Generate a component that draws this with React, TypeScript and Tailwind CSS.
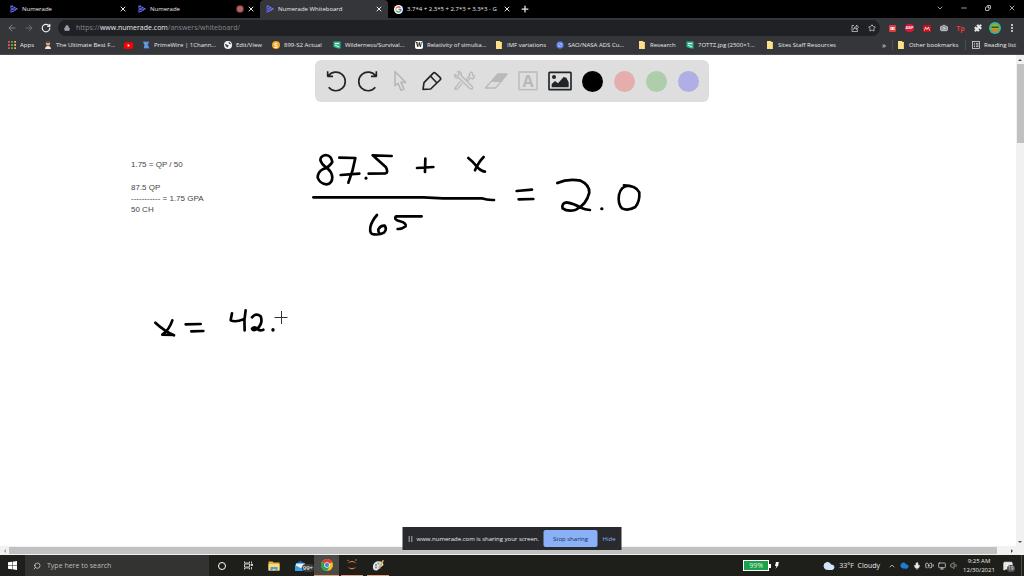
import type { ReactNode } from 'react';
import {
  ArrowLeft,
  ArrowRight,
  BatteryCharging,
  Camera,
  ChevronDown,
  ChevronUp,
  Cloud,
  Copy,
  Lock,
  MessageSquareText,
  Mic,
  Minus,
  Monitor,
  MoreVertical,
  Plus,
  Puzzle,
  RotateCw,
  Search,
  Star,
  Volume1,
  X,
} from 'lucide-react';

// ---------- Small icons ----------

const NumeradeIcon = () => (
  <svg viewBox="0 0 16 16" className="h-2 w-2 shrink-0" fill="none" stroke="#5b5ce6" strokeWidth="2.4">
    <path d="M2 1v5l6 2-6 2v5" />
    <path d="M3 1.5 14 8 3 14.500" stroke="#7f80ff" strokeDasharray="4 1" />
  </svg>
);

const GoogleIcon = () => (
  <svg viewBox="0 0 18 18" className="h-[9px] w-[9px] shrink-0" fill="none" strokeWidth="2.6">
    <circle cx="9" cy="9" r="9" fill="#fff" />
    <path d="M13 5.500A5.300 5.300 0 0 0 4.500 6.500" stroke="#ea4335" />
    <path d="M4.500 6.500a5.300 5.300 0 0 0 0 5" stroke="#fbbc05" />
    <path d="M4.500 11.500a5.300 5.300 0 0 0 7.700 1.500" stroke="#34a853" />
    <path d="M12.200 13A5 5 0 0 0 14 9H9" stroke="#4285f4" />
  </svg>
);

const AppsIcon = () => (
  <svg viewBox="0 0 9 9" className="h-2 w-2 shrink-0">
    <path d="M0 0h2v2H0zM0 3.500h2v2H0zM0 7h2v2H0z" fill="#e8584a" />
    <path d="M3.500 0h2v2h-2zM3.500 3.500h2v2h-2zM3.500 7h2v2h-2z" fill="#4fae6b" />
    <path d="M7 0h2v2H7zM7 3.500h2v2H7zM7 7h2v2H7z" fill="#e9b646" />
  </svg>
);

const FolderIcon = () => (
  <svg viewBox="0 0 14 16" className="h-2 w-2 shrink-0">
    <path d="M1 0h8l1 2h3v13l-1 1H1z" fill="#fbe08a" />
    <path d="M11 4h2v11h-2z" fill="#f0c95c" />
  </svg>
);

const PersonIcon = () => (
  <svg viewBox="0 0 16 16" className="h-2 w-2 shrink-0">
    <circle cx="8" cy="5" r="4.500" fill="#d9a583" />
    <path d="M2 16c0-8 12-8 12 0z" fill="#f3e4d7" />
    <path d="M4 4c1-5 7-5 8 0z" fill="#6b3a25" />
  </svg>
);

const YoutubeIcon = () => (
  <svg viewBox="0 0 16 12" className="h-[7px] w-[9px] shrink-0">
    <rect width="16" height="12" rx="3" fill="#f00" />
    <path d="M6.500 3.500v5l4-2.500z" fill="#fff" />
  </svg>
);

const FilmIcon = () => (
  <svg viewBox="0 0 16 16" className="h-2 w-2 shrink-0">
    <path d="M1 1h14l-3 7 3 7H3l2-6z" fill="#3c78c8" />
    <path d="M4 4h8M5 8h6M4 12h9" stroke="#a9d0f5" strokeWidth="1.500" />
  </svg>
);

const GlobeIcon = () => (
  <svg viewBox="0 0 16 16" className="h-2 w-2 shrink-0">
    <circle cx="8" cy="8" r="8" fill="#f1f3f4" />
    <path d="M2 6c3-1 4 2 6 2s1 3-1 5c-3-1-4-3-5-7zM9 2c3 0 4 2 5 4-2 1-5 0-5-4z" fill="#45484d" />
  </svg>
);

const LetterIcon = ({ letter, className }: { letter: string; className: string }) => (
  <span className={`flex h-2 w-2 shrink-0 items-center justify-center text-[7px] leading-none font-bold ${className}`}>
    {letter}
  </span>
);

const ImageSiteIcon = () => (
  <svg viewBox="0 0 16 16" className="h-2 w-2 shrink-0">
    <path d="M1 1h14v14h-5l-9-3z" fill="#35b88a" />
    <path d="M4 5h8M4 8l8 4" stroke="#d6fff0" strokeWidth="2" />
  </svg>
);

const AdsIcon = () => (
  <svg viewBox="0 0 16 16" className="h-2 w-2 shrink-0">
    <circle cx="8" cy="8" r="7.500" fill="#4e6fd8" />
    <circle cx="8" cy="8" r="4" fill="none" stroke="#c9d6ff" strokeWidth="1.500" />
    <path d="M5 11 11 5" stroke="#c9d6ff" strokeWidth="1.500" />
  </svg>
);

const ReadingListIcon = () => (
  <svg viewBox="0 0 16 16" className="h-2 w-2 shrink-0" fill="none" stroke="#d5d7da" strokeWidth="1.600">
    <rect x="1" y="1" width="14" height="14" />
    <path d="M4 5h2M8 5h5M4 8h2M8 8h5M4 11h2M8 11h5" />
  </svg>
);

const ShareIcon = () => (
  <svg viewBox="0 0 16 16" className="h-2 w-2" fill="none" stroke="#c4c7ca" strokeWidth="1.600">
    <path d="M6 3H2v12h11v-4" />
    <path d="M5 11q1-6 6-6V2l4 4.500-4 4.500V8q-4 0-6 3z" />
  </svg>
);

const AvatarIcon = () => (
  <svg viewBox="0 0 24 24" className="h-3 w-3">
    <circle cx="12" cy="12" r="12" fill="#38b49c" />
    <ellipse cx="12" cy="12" rx="9" ry="8" fill="#8fb52e" />
    <path d="M4 13q8 4 16 0l-3 6H7z" fill="#e2742c" />
    <path d="M5 9h14v3H5z" fill="#37561d" />
  </svg>
);

// ---------- Data ----------

interface Tab {
  title: string;
  icon: ReactNode;
  active?: boolean;
  recording?: boolean;
}

const tabs: Tab[] = [
  { title: 'Numerade', icon: <NumeradeIcon /> },
  { title: 'Numerade', icon: <NumeradeIcon />, recording: true },
  { title: 'Numerade Whiteboard', icon: <NumeradeIcon />, active: true },
  { title: '3.7*4 + 2.3*5 + 2.7*3 + 3.3*3 - G', icon: <GoogleIcon /> },
];

interface Bookmark {
  label: string;
  icon: ReactNode;
  width: string;
}

const bookmarks: Bookmark[] = [
  { label: 'Apps', icon: <AppsIcon />, width: 'w-9' },
  { label: 'The Ultimate Best F...', icon: <PersonIcon />, width: 'w-20' },
  { label: '', icon: <YoutubeIcon />, width: 'w-[18px]' },
  { label: 'PrimeWire | 1Chann...', icon: <FilmIcon />, width: 'w-[82px]' },
  { label: 'Edit/View', icon: <GlobeIcon />, width: 'w-12' },
  { label: '899-S2 Actual', icon: <LetterIcon letter="S" className="rounded-full bg-[#f5a623] text-white" />, width: 'w-[61px]' },
  { label: 'Wilderness/Survival...', icon: <ImageSiteIcon />, width: 'w-[82px]' },
  { label: 'Relativity of simulta...', icon: <LetterIcon letter="W" className="rounded-xs bg-white font-serif text-black" />, width: 'w-20' },
  { label: 'IMF variations', icon: <FolderIcon />, width: 'w-[61px]' },
  { label: 'SAO/NASA ADS Cu...', icon: <AdsIcon />, width: 'w-[82px]' },
  { label: 'Research', icon: <FolderIcon />, width: 'w-12' },
  { label: '7OTTZ.jpg (2500×1...', icon: <ImageSiteIcon />, width: 'w-20' },
  { label: 'Sites Staff Resources', icon: <FolderIcon />, width: 'w-20' },
];

// Drawing tools, each drawn on a 96 unit grid
const tools: { name: string; icon: ReactNode; enabled: boolean }[] = [
  {
    name: 'Undo',
    enabled: true,
    icon: <path d="M23 19v15h16M25 33A28 28 0 1 1 26 67" strokeWidth="5" />,
  },
  {
    name: 'Redo',
    enabled: true,
    icon: <path d="M73 19v15H57M71 33A28 28 0 1 0 70 67" strokeWidth="5" />,
  },
  {
    name: 'Select',
    enabled: false,
    icon: <path d="M33 20v42l9-7 9 21 9-4-9-20h14z" strokeWidth="5" />,
  },
  {
    name: 'Pen',
    enabled: true,
    icon: (
      <g strokeWidth="5">
        <path d="M21 73l3-20 27-28q4-4 8 0l13 12q4 4 0 8L44 72z" />
        <path d="M43 33l20 21" />
      </g>
    ),
  },
  {
    name: 'Tools',
    enabled: false,
    icon: (
      <g strokeWidth="4">
        <path d="M32 38 66 71q6 3 8-2 1-3-2-5L40 32q3-12-11-13l6 8-7 7-8-6q-1 15 12 10z" />
        <path d="M54 44l10-10q-1-9 5-13l5 4-1 5 6 4-4 8-7-3-9 9M43 55 27 73q-5 2-7-3L37 49" />
      </g>
    ),
  },
  {
    name: 'Eraser',
    enabled: false,
    icon: (
      <g strokeWidth="4">
        <path d="M16 69l18-20h30L46 69z" />
        <path d="M34 49l19-22h28L64 49z" fill="currentColor" />
      </g>
    ),
  },
  {
    name: 'Text',
    enabled: false,
    icon: (
      <g>
        <rect x="21" y="21" width="54" height="53" strokeWidth="4" />
        <text x="48" y="65" textAnchor="middle" fontSize="48" fontWeight="bold" fill="currentColor" stroke="none">
          A
        </text>
      </g>
    ),
  },
  {
    name: 'Image',
    enabled: true,
    icon: (
      <g>
        <rect x="15" y="22" width="66" height="52" rx="2" strokeWidth="5" />
        <circle cx="30" cy="36" r="6" fill="currentColor" stroke="none" />
        <path d="M23 67V57l10-9 9 7 17-19 8 2 7 14v15z" fill="currentColor" stroke="none" />
      </g>
    ),
  },
];

const colors = [
  { name: 'Black', className: 'bg-black' },
  { name: 'Red', className: 'bg-[#e6adad]' },
  { name: 'Green', className: 'bg-[#aecdaa]' },
  { name: 'Blue', className: 'bg-[#b0aee5]' },
];

// ---------- Browser ----------

const TabStrip = () => (
  <div className="flex h-[18px] shrink-0 bg-black pl-1">
    {tabs.map((tab, index) => (
      <div
        key={index}
        className={`flex w-32 items-center gap-1 rounded-t pr-[5px] pl-1.5 ${tab.active ? 'bg-[#35363a]' : ''}`}
      >
        {tab.icon}
        <button className="flex-1 text-left whitespace-nowrap">{tab.title}</button>
        {tab.recording && <span className="h-1.5 w-1.5 rounded-full bg-[#b86464] ring-1 ring-[#5c2a2a]" />}
        <button aria-label="Close tab">
          <X className="h-2 w-2" strokeWidth={3} />
        </button>
      </div>
    ))}
    <div className="flex items-center pl-1">
      <button aria-label="New tab">
        <Plus className="h-2.5 w-2.5" strokeWidth={3} />
      </button>
    </div>
    <div className="ml-auto flex h-4 items-center">
      <button aria-label="Search tabs" className="flex w-6 justify-center">
        <ChevronDown className="h-2 w-2" />
      </button>
      <button aria-label="Minimize" className="flex w-6 justify-center">
        <Minus className="h-2 w-2" />
      </button>
      <button aria-label="Restore" className="flex w-6 justify-center">
        <Copy className="h-1.5 w-1.5 -scale-x-100" strokeWidth={3} />
      </button>
      <button aria-label="Close" className="flex w-6 justify-center">
        <X className="h-2 w-2" />
      </button>
    </div>
  </div>
);

const AddressBar = () => (
  <div className="flex h-5 shrink-0 items-center bg-[#35363a]">
    <div className="flex items-center pl-1">
      <button aria-label="Back" className="flex w-4 justify-center text-[#8d8e91]">
        <ArrowLeft className="h-2.5 w-2.5" />
      </button>
      <button aria-label="Forward" className="flex w-[17px] justify-center text-[#77787b]">
        <ArrowRight className="h-2.5 w-2.5" />
      </button>
      <button aria-label="Reload" className="flex w-[17px] justify-center">
        <RotateCw className="h-2.5 w-2.5" strokeWidth={3} />
      </button>
    </div>
    <div className="ml-1 flex h-4 flex-1 items-center rounded-full bg-[#202124] pl-1.5">
      <Lock className="h-1.5 w-1.5 text-[#9aa0a6]" fill="currentColor" strokeWidth={3} />
      <a href="#whiteboard" className="ml-1.5 flex-1 text-[7px] text-[#85888c]">
        https://<span className="text-[#e8eaed]">www.numerade.com</span>/answers/whiteboard/
      </a>
      <button aria-label="Share" className="flex w-[17px] justify-center">
        <ShareIcon />
      </button>
      <button aria-label="Bookmark" className="flex w-[17px] justify-center">
        <Star className="h-2 w-2" />
      </button>
    </div>
    <div className="ml-1 flex items-center pr-1">
      <button aria-label="Recorder" className="flex w-[17px] justify-center">
        <svg viewBox="0 0 14 14" className="h-[7px] w-[7px]">
          <rect width="14" height="14" rx="2" fill="#e23b3b" />
          <path d="M3 4h8v6H3z" fill="#fff" />
          <path d="M5 5h1v4H5zM8 5h1v4H8z" fill="#e23b3b" />
        </svg>
      </button>
      <button aria-label="Ad blocker" className="flex w-[17px] justify-center">
        <span className="flex h-2 w-[9px] items-center justify-center rounded bg-[#d9163a] text-[4px] font-bold">ABP</span>
      </button>
      <button aria-label="Mendeley" className="flex w-[17px] justify-center">
        <svg viewBox="0 0 16 14" className="h-[7px] w-2">
          <rect width="16" height="14" rx="1" fill="#c5121f" />
          <path d="M3 11l2-7 3 5 3-5 2 7" fill="none" stroke="#fff" strokeWidth="1.500" />
        </svg>
      </button>
      <button aria-label="Screenshot" className="flex w-[17px] justify-center text-[#c8cacc]">
        <Camera className="h-2 w-2" strokeWidth={3} fill="#8a8c90" />
      </button>
      <button aria-label="Tp" className="flex w-[17px] justify-center text-[7px] leading-none font-bold text-[#e0383e]">
        Tp
      </button>
      <button aria-label="Extensions" className="flex w-[17px] justify-center">
        <Puzzle className="h-2 w-2" fill="currentColor" />
      </button>
      <button aria-label="Profile" className="flex w-[17px] justify-center">
        <AvatarIcon />
      </button>
      <button aria-label="Menu" className="flex w-[17px] justify-center">
        <MoreVertical className="h-2.5 w-2.5" strokeWidth={3} />
      </button>
    </div>
  </div>
);

const BookmarkLink = ({ label, icon, width }: Bookmark) => (
  <a href="#bookmark" aria-label={label || 'YouTube'} className={`flex shrink-0 items-center gap-1 whitespace-nowrap ${width}`}>
    {icon}
    {label}
  </a>
);

const BookmarksBar = () => (
  <div className="flex h-[17px] shrink-0 items-center border-b border-[#4a4b4e] bg-[#35363a] pb-0.5 pl-2">
    {bookmarks.map((bookmark, index) => (
      <BookmarkLink key={index} {...bookmark} />
    ))}
    <div className="ml-auto flex items-center">
      <button aria-label="More bookmarks" className="mr-1.5 text-[8px] leading-none">
        »
      </button>
      <BookmarkLink label="Other bookmarks" icon={<FolderIcon />} width="border-l border-[#4c4d51] pl-1 w-[73px]" />
      <BookmarkLink label="Reading list" icon={<ReadingListIcon />} width="border-l border-[#4c4d51] pl-1.5 w-[59px]" />
    </div>
  </div>
);

// ---------- Whiteboard ----------

const WhiteboardToolbar = () => (
  <div className="flex h-[42px] items-center rounded-md bg-[#dedede] px-[5px]">
    {tools.map((tool) => (
      <button key={tool.name} aria-label={tool.name} className={tool.enabled ? 'text-[#212529]' : 'text-[#b9b9b9]'}>
        <svg viewBox="0 0 96 96" className="h-8 w-8" fill="none" stroke="currentColor" strokeLinejoin="round">
          {tool.icon}
        </svg>
      </button>
    ))}
    {colors.map((color) => (
      <button key={color.name} aria-label={color.name} className="flex w-8 justify-center">
        <span className={`h-[21px] w-[21px] rounded-full ${color.className}`} />
      </button>
    ))}
  </div>
);

// Pen strokes on the canvas
const Ink = () => (
  <svg
    viewBox="150 145 500 200"
    className="absolute top-[90px] left-[150px] h-[200px] w-[500px]"
    fill="none"
    stroke="#000"
    strokeLinecap="round"
    strokeLinejoin="round"
  >
    <g transform="translate(300 140) scale(.3333)" strokeWidth="8">
      <path d="M97 66Q94 46 77 45Q62 47 61 60Q64 72 78 82Q96 94 97 112Q96 131 80 133Q60 132 53 113Q53 96 68 88Q88 82 97 66" />
      <path d="M118 53 166 54Q160 90 145 128M122 105 178 101" />
      <path d="M198 114v1" strokeWidth="9" />
      <path d="M275 48 218 46 258 82Q266 98 256 100L206 101" />
      <path d="M351 84 400 81M376 56 375 96" />
      <path d="M505 54Q520 66 530 79Q542 93 555 95M551 51Q536 66 525 91" />
      <path d="M40 172H370L430 175H545Q562 181 582 180" />
      <path d="M231 225Q215 243 211 262Q208 284 222 283Q240 285 252 278Q262 268 254 257Q242 256 235 268Q234 276 239 281" />
      <path d="M365 229H288Q280 239 300 244Q320 249 317 259Q306 268 293 267" />
      <path d="M650 153 696 149M656 178 700 177" />
      <path d="M772 129Q804 115 842 122Q869 134 868 158Q860 193 828 209Q803 216 788 205Q784 189 800 187Q822 190 842 203Q855 209 870 210" />
      <path d="M905 206h1" strokeWidth="9" />
      <path d="M984 138Q963 138 957 165Q953 192 966 205Q984 214 1006 201Q1020 184 1018 157Q1008 136 972 136" />
    </g>
    <g transform="translate(140 295) scale(.3333)" strokeWidth="8">
      <path d="M46 83Q72 107 102 121M97 76Q88 104 67 119Q84 119 102 120" />
      <path d="M137 88 182 87M154 109 190 108" />
      <path d="M276 55 272 76Q286 83 311 73M317 46Q311 75 314 106" />
      <path d="M336 67Q348 52 362 64Q370 84 352 101Q340 110 336 101Q343 93 352 101Q358 109 370 104" />
      <path d="M399 104v1" strokeWidth="10" />
    </g>
    <path d="M274.500 317.500h13M281.500 311v13" stroke="#333" strokeLinecap="butt" />
  </svg>
);

const Whiteboard = () => (
  <main className="relative flex-1 overflow-hidden bg-white">
    <div className="flex justify-center pt-[5px] pl-2">
      <WhiteboardToolbar />
    </div>
    <div className="absolute top-[104px] left-[131px] font-['Liberation_Sans',sans-serif] text-[8px] leading-[11px] text-[#444]">
      <p className="mb-3">1.75 = QP / 50</p>
      <p>87.5 QP</p>
      <p>----------- = 1.75 GPA</p>
      <p>50 CH</p>
    </div>
    <Ink />
  </main>
);

const VerticalScrollbar = () => (
  <div className="flex w-2 flex-col items-center bg-[#f1f1f1] text-[#505050]">
    <svg viewBox="0 0 8 9" className="h-[9px] w-2" fill="currentColor">
      <path d="M2 6l2-2 2 2z" />
    </svg>
    <div className="h-[16%] w-[7px] bg-[#c1c1c1]" />
    <svg viewBox="0 0 8 9" className="mt-auto h-[9px] w-2" fill="currentColor">
      <path d="M2 4h4l-2 2z" />
    </svg>
  </div>
);

const HorizontalScrollbar = () => (
  <div className="flex h-[9px] shrink-0 items-center bg-[#f1f1f1] pr-2 text-[#505050]">
    <svg viewBox="0 0 9 8" className="h-2 w-[9px]" fill="#a3a3a3">
      <path d="M6 2v4L4 4z" />
    </svg>
    <div className="mr-2.5 h-[7px] flex-1 bg-[#c1c1c1]" />
    <svg viewBox="0 0 9 8" className="h-2 w-[9px]" fill="currentColor">
      <path d="M4 2v4l2-2z" />
    </svg>
  </div>
);

const SharingBar = () => (
  <div className="absolute bottom-[5px] left-1/2 flex h-[23px] w-[219px] -translate-x-1/2 items-center bg-[#292a2d] px-1.5">
    <svg viewBox="0 0 4 8" className="h-2 w-1" fill="#dadce0">
      <path d="M0 1h1v6H0zM3 1h1v6H3z" />
    </svg>
    <span className="ml-1 flex-1 whitespace-nowrap">www.numerade.com is sharing your screen.</span>
    <button className="h-[17px] w-[54px] rounded-xs bg-[#8ab0f8] text-[#202c48]">Stop sharing</button>
    <button className="ml-[5px] text-[#8ab0f8]">Hide</button>
  </div>
);

// ---------- Taskbar ----------

const Taskbar = () => (
  <footer className="flex h-[21px] shrink-0 items-center bg-[#1e1e1b] text-[7px]">
    <button aria-label="Start" className="flex w-[25px] justify-center">
      <svg viewBox="0 0 18 18" className="h-[9px] w-[9px]" fill="#fff">
        <path d="M0 2.500 8 1.500V8.500H0zM9 1.300 18 0V8.500H9zM0 9.500H8V16.500L0 15.500zM9 9.500h9V18L9 16.700z" />
      </svg>
    </button>
    <label className="flex h-full w-[184px] items-center gap-1.5 bg-[#333332] pl-2">
      <Search className="h-2 w-2 -scale-x-100" />
      <input
        type="search"
        placeholder="Type here to search"
        aria-label="Search"
        className="min-w-0 flex-1 bg-transparent outline-none placeholder:text-[#bdbdbd]"
      />
    </label>
    <div className="flex h-full items-center">
      <button aria-label="Cortana" className="flex w-[26px] justify-center">
        <span className="h-2 w-2 rounded-full border border-white" />
      </button>
      <button aria-label="Task view" className="flex w-[26px] justify-center">
        <svg viewBox="0 0 18 18" className="h-[9px] w-[9px]" fill="none" stroke="#d8d8d8" strokeWidth="1.800">
          <path d="M1 1v3h10V1M1 6h10v6H1zM1 17v-3h10v3M15 1v3M15 12v5" />
          <path d="M14 6h3v3h-3z" fill="#d8d8d8" />
        </svg>
      </button>
      <button aria-label="File Explorer" className="flex w-[26px] justify-center">
        <svg viewBox="0 0 24 20" className="h-2.5 w-3">
          <path d="M1 1h8l2 2h12v16H1z" fill="#e8b23a" />
          <path d="M1 6h22v13H1z" fill="#fbdb74" />
          <path d="M5 19v-7h14v7h-4v-3H9v3z" fill="#4a9ee0" />
        </svg>
      </button>
      <button aria-label="Mail" className="relative flex w-[27px] justify-center">
        <svg viewBox="0 0 28 24" className="h-3 w-3.5">
          <path d="M2 9 13 1l11 8v13H2z" fill="#1267b4" />
          <path d="M4 7h18v9H4z" fill="#e9f4fc" />
          <path d="M2 10l11 6 11-6v12H2z" fill="#36a3e8" />
        </svg>
        <span className="absolute top-1 right-0 rounded-full bg-[#3b3b3a] px-px text-[6px] leading-[8px] font-semibold">99+</span>
      </button>
      <button aria-label="Chrome" className="flex h-full w-[25px] items-center justify-center border-b border-[#e8a07c] bg-[#4a4a48]">
        <svg viewBox="0 0 24 24" className="h-3 w-3">
          <circle cx="12" cy="12" r="12" fill="#fbc116" />
          <path d="M12 12 1.600 6A12 12 0 0 1 22.400 6z" fill="#e33b2e" />
          <path d="M12 12 1.600 6A12 12 0 0 0 12 24l5-9z" fill="#2ba24c" />
          <circle cx="12" cy="12" r="5.500" fill="#fff" />
          <circle cx="12" cy="12" r="4.300" fill="#4285f4" />
        </svg>
      </button>
      <button aria-label="Jupyter" className="mx-0.5 flex h-full w-[22px] items-center justify-center border-b border-[#e8a07c]">
        <svg viewBox="0 0 24 24" className="h-3 w-3" fill="#e8713a">
          <path d="M3 9Q12-2 21 9Q12 3 3 9zM3 15Q12 26 21 15Q12 21 3 15z" />
          <circle cx="4" cy="3" r="1.300" fill="#999" />
          <circle cx="20" cy="2" r="1.500" fill="#999" />
        </svg>
      </button>
      <button aria-label="Paint" className="mx-0.5 flex h-full w-[22px] items-center justify-center border-b border-[#e8a07c]">
        <svg viewBox="0 0 26 24" className="h-3 w-[13px]">
          <path d="M2 14C3 5 14 2 21 7c5 6-2 8-5 10s-3 6-8 6-7-4-6-9z" fill="#dbe6ec" />
          <circle cx="8" cy="12" r="2" fill="#3c8fd6" />
          <circle cx="13" cy="9" r="2" fill="#56ab52" />
          <circle cx="8" cy="17" r="2" fill="#d65a4a" />
          <path d="M12 18 21 2l3 1-8 17z" fill="#d8a86a" />
        </svg>
      </button>
    </div>

    <div className="ml-auto flex h-full items-center">
      <span className="flex h-[11px] w-[26px] items-center justify-center border border-white bg-[#18a34a]">99%</span>
      <span className="h-1 w-0.5 bg-white" />
      <svg viewBox="0 0 8 14" className="mr-11 ml-1 h-[7px] w-1" fill="#fff">
        <path d="M2 0h6L6 5h2L1 14l2-6H0z" />
      </svg>
      <Cloud className="h-3 w-3 text-[#cfe6f8]" fill="currentColor" />
      <span className="ml-1 whitespace-pre">33°F  Cloudy</span>
      <ChevronUp className="ml-2 h-2 w-2" />
      <Cloud className="ml-1 h-[9px] w-[9px] text-[#1a7fd6]" fill="currentColor" />
      <Mic className="ml-1 h-2 w-2" fill="currentColor" />
      <BatteryCharging className="ml-1 h-[9px] w-[9px]" />
      <Monitor className="ml-1 h-2 w-2" />
      <Volume1 className="ml-1 h-[9px] w-[9px] text-[#b5b5b5]" />
      <div className="ml-0.5 w-9 text-center text-[6px] leading-[9px]">
        <div>9:25 AM</div>
        <div>12/30/2021</div>
      </div>
      <button aria-label="Notifications" className="relative mr-2 ml-1.5">
        <MessageSquareText className="h-2.5 w-2.5" fill="#ddd" stroke="#fff" />
        <span className="absolute top-1 left-1 rounded-full bg-[#555] px-px text-[5px] leading-[7px]">19</span>
      </button>
      <span className="mr-0.5 h-full w-px bg-[#4a4a48]" />
    </div>
  </footer>
);

const App = () => {
  return (
    <div className="flex h-screen flex-col overflow-hidden bg-white font-['Open_Sans','Noto_Sans',sans-serif] text-[6px] leading-[10px] text-[#e8eaed]">
      <header>
        <TabStrip />
        <AddressBar />
        <BookmarksBar />
      </header>
      <div className="relative flex min-h-0 flex-1 flex-col">
        <div className="flex min-h-0 flex-1">
          <Whiteboard />
          <VerticalScrollbar />
        </div>
        <HorizontalScrollbar />
        <SharingBar />
      </div>
      <Taskbar />
    </div>
  );
};

export default App;
